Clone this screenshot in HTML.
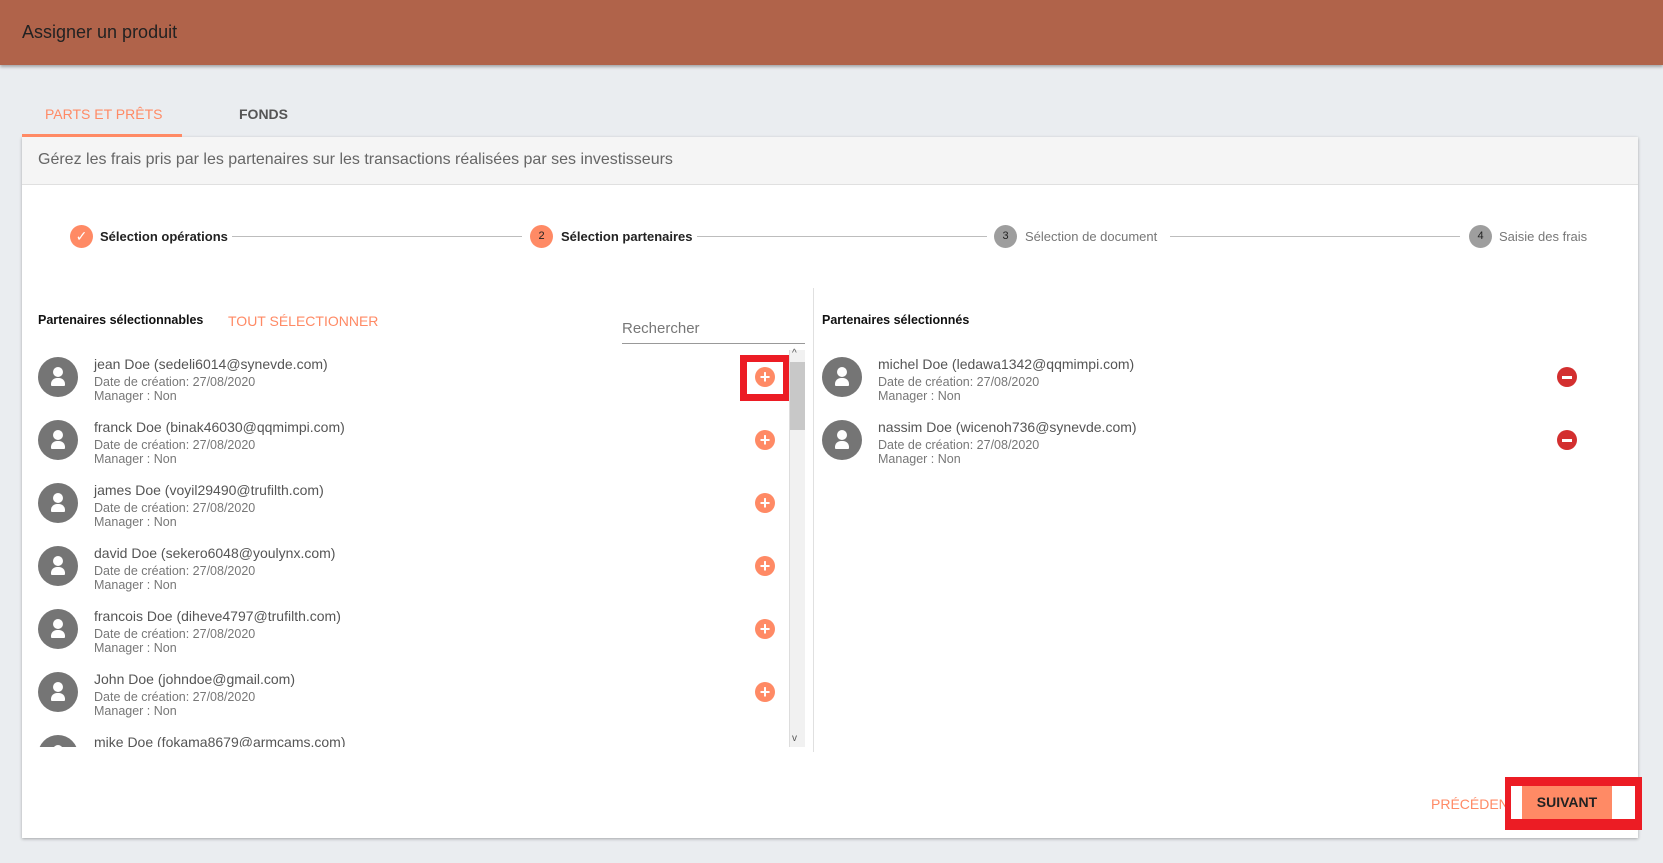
<!DOCTYPE html>
<html><head><meta charset="utf-8"><style>
*{margin:0;padding:0;box-sizing:border-box}
body{width:1663px;height:863px;background:#eaedf0;font-family:"Liberation Sans",sans-serif;position:relative;overflow:hidden}
.a{position:absolute;white-space:nowrap}
.hdr{left:0;top:0;width:1663px;height:65px;background:#b0634a;box-shadow:0 2px 3px rgba(0,0,0,.3)}
.card{left:22px;top:137px;width:1616px;height:701px;background:#fff;box-shadow:0 1px 3px rgba(0,0,0,.3)}
.strip{left:22px;top:137px;width:1616px;height:48px;background:#f5f5f5;border-bottom:1px solid #e0e0e0}
.circ{width:23px;height:23px;border-radius:50%;color:#222;font-size:11px;text-align:center;line-height:23px}
.line{height:1px;background:#bdbdbd}
.av{width:40px;height:40px;border-radius:50%;background:#757575}
.av:before{content:"";position:absolute;left:15px;top:10px;width:10px;height:10px;border-radius:50%;background:#fff}
.av:after{content:"";position:absolute;left:13px;top:21px;width:14px;height:8px;border-radius:6px 6px 1px 1px;background:#fff}
.nm{font-size:14px;color:#555}
.sm{font-size:12.5px;color:#777}
.plus{width:20px;height:20px;border-radius:50%;background:#ff8a65;color:#fff;font-size:18px;line-height:20px;text-align:center;font-weight:bold}
.minus{width:20px;height:20px;border-radius:50%;background:#d32f2f}
.minus:after{content:"";position:absolute;left:5px;top:9px;width:10px;height:2.5px;background:#fff}
</style></head><body>
<div class="a hdr"></div>
<div class="a" style="left:22px;top:22px;font-size:18px;color:#222">Assigner un produit</div>
<div class="a" style="left:45px;top:106px;font-size:14px;color:#ff8a65">PARTS ET PRÊTS</div>
<div class="a" style="left:239px;top:106px;font-size:14px;color:#555;font-weight:bold">FONDS</div>
<div class="a card"></div>
<div class="a strip"></div>
<div class="a" style="left:22px;top:134px;width:160px;height:3px;background:#ff8a65"></div>
<div class="a" style="left:38px;top:151px;font-size:16px;color:#666">Gérez les frais pris par les partenaires sur les transactions réalisées par ses investisseurs</div>

<div class="a circ" style="left:70px;top:225px;background:#ff8a65;color:#fff;font-size:14px">✓</div>
<div class="a" style="left:100px;top:229px;font-size:13px;color:#222;font-weight:bold">Sélection opérations</div>
<div class="a line" style="left:232px;top:236px;width:290px"></div>
<div class="a circ" style="left:530px;top:225px;background:#ff8a65">2</div>
<div class="a" style="left:561px;top:229px;font-size:13px;color:#222;font-weight:bold">Sélection partenaires</div>
<div class="a line" style="left:697px;top:236px;width:290px"></div>
<div class="a circ" style="left:994px;top:225px;background:#9e9e9e">3</div>
<div class="a" style="left:1025px;top:229px;font-size:13px;color:#777">Sélection de document</div>
<div class="a line" style="left:1170px;top:236px;width:290px"></div>
<div class="a circ" style="left:1469px;top:225px;background:#9e9e9e">4</div>
<div class="a" style="left:1499px;top:229px;font-size:13px;color:#777">Saisie des frais</div>

<div class="a" style="left:38px;top:313px;font-size:12.5px;color:#111;font-weight:bold">Partenaires sélectionnables</div>
<div class="a" style="left:228px;top:313px;font-size:14px;color:#ff8a65">TOUT SÉLECTIONNER</div>
<div class="a" style="left:622px;top:320px;font-size:15px;color:#777">Rechercher</div>
<div class="a" style="left:622px;top:343px;width:183px;height:1px;background:#999"></div>

<div class="a" style="left:22px;top:350px;width:783px;height:397px;overflow:hidden">
<div style="position:relative">
<div class="a av" style="left:16px;top:7px"></div><div class="a nm" style="left:72px;top:6px">jean Doe (sedeli6014@synevde.com)</div><div class="a sm" style="left:72px;top:25px">Date de création: 27/08/2020</div><div class="a sm" style="left:72px;top:39px">Manager : Non</div>
<div class="a av" style="left:16px;top:70px"></div><div class="a nm" style="left:72px;top:69px">franck Doe (binak46030@qqmimpi.com)</div><div class="a sm" style="left:72px;top:88px">Date de création: 27/08/2020</div><div class="a sm" style="left:72px;top:102px">Manager : Non</div>
<div class="a av" style="left:16px;top:133px"></div><div class="a nm" style="left:72px;top:132px">james Doe (voyil29490@trufilth.com)</div><div class="a sm" style="left:72px;top:151px">Date de création: 27/08/2020</div><div class="a sm" style="left:72px;top:165px">Manager : Non</div>
<div class="a av" style="left:16px;top:196px"></div><div class="a nm" style="left:72px;top:195px">david Doe (sekero6048@youlynx.com)</div><div class="a sm" style="left:72px;top:214px">Date de création: 27/08/2020</div><div class="a sm" style="left:72px;top:228px">Manager : Non</div>
<div class="a av" style="left:16px;top:259px"></div><div class="a nm" style="left:72px;top:258px">francois Doe (diheve4797@trufilth.com)</div><div class="a sm" style="left:72px;top:277px">Date de création: 27/08/2020</div><div class="a sm" style="left:72px;top:291px">Manager : Non</div>
<div class="a av" style="left:16px;top:322px"></div><div class="a nm" style="left:72px;top:321px">John Doe (johndoe@gmail.com)</div><div class="a sm" style="left:72px;top:340px">Date de création: 27/08/2020</div><div class="a sm" style="left:72px;top:354px">Manager : Non</div>
<div class="a av" style="left:16px;top:385px"></div><div class="a nm" style="left:72px;top:384px">mike Doe (fokama8679@armcams.com)</div>
<div class="a plus" style="left:733px;top:80px">+</div>
<div class="a plus" style="left:733px;top:143px">+</div>
<div class="a plus" style="left:733px;top:206px">+</div>
<div class="a plus" style="left:733px;top:269px">+</div>
<div class="a plus" style="left:733px;top:332px">+</div>
</div></div>
<div class="a" style="left:740px;top:355px;width:50px;height:46px;background:#ec1c24"></div>
<div class="a" style="left:747px;top:362px;width:36px;height:32px;background:#fff"></div>
<div class="a plus" style="left:755px;top:367px">+</div>
<div class="a" style="left:789px;top:350px;width:16px;height:397px;background:#f1f1f1;border-left:1px solid #ddd"></div>
<div class="a" style="left:790px;top:362px;width:15px;height:68px;background:#c8c8c8"></div>
<div class="a" style="left:792px;top:348px;font-size:10px;color:#555">^</div>
<div class="a" style="left:792px;top:733px;font-size:10px;color:#555">v</div>
<div class="a" style="left:813px;top:288px;width:1px;height:464px;background:#e0e0e0"></div>

<div class="a" style="left:822px;top:313px;font-size:12.5px;color:#111;font-weight:bold">Partenaires sélectionnés</div>
<div class="a av" style="left:822px;top:357px"></div><div class="a nm" style="left:878px;top:356px">michel Doe (ledawa1342@qqmimpi.com)</div><div class="a sm" style="left:878px;top:375px">Date de création: 27/08/2020</div><div class="a sm" style="left:878px;top:389px">Manager : Non</div>
<div class="a av" style="left:822px;top:420px"></div><div class="a nm" style="left:878px;top:419px">nassim Doe (wicenoh736@synevde.com)</div><div class="a sm" style="left:878px;top:438px">Date de création: 27/08/2020</div><div class="a sm" style="left:878px;top:452px">Manager : Non</div>
<div class="a minus" style="left:1557px;top:367px"></div>
<div class="a minus" style="left:1557px;top:430px"></div>

<div class="a" style="left:1431px;top:796px;font-size:14px;color:#ff8a65">PRÉCÉDEN</div>
<div class="a" style="left:1505px;top:777px;width:137px;height:53px;background:#ec1c24"></div>
<div class="a" style="left:1511px;top:786px;width:124px;height:33px;background:#fff"></div>
<div class="a" style="left:1522px;top:786px;width:90px;height:33px;background:#ff8a65;color:#222;font-size:14px;font-weight:bold;text-align:center;line-height:33px">SUIVANT</div>
</body></html>
